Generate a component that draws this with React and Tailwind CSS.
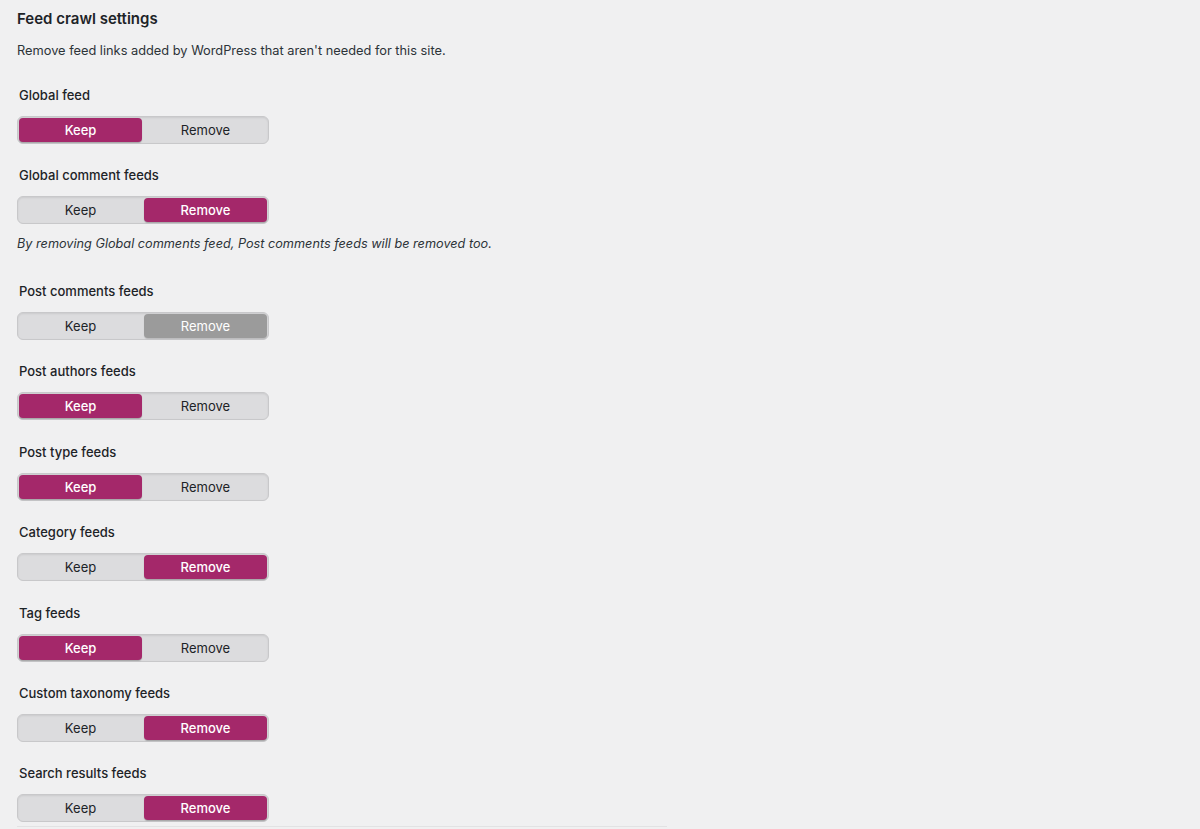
import { useState } from 'react';

const initial = [
  { id: 'global', label: 'Global feed', value: 'keep', gap: '' },
  {
    id: 'global_comments',
    label: 'Global comment feeds',
    value: 'remove',
    gap: 'mt-[21px]',
    note: 'By removing Global comments feed, Post comments feeds will be removed too.',
  },
  { id: 'post_comments', label: 'Post comments feeds', value: 'remove', disabled: true, gap: 'mt-[27px]' },
  { id: 'post_authors', label: 'Post authors feeds', value: 'keep', gap: 'mt-[21px]' },
  { id: 'post_type', label: 'Post type feeds', value: 'keep', gap: 'mt-[22px]' },
  { id: 'category', label: 'Category feeds', value: 'remove', gap: 'mt-[21px]' },
  { id: 'tag', label: 'Tag feeds', value: 'keep', gap: 'mt-[22px]' },
  { id: 'taxonomy', label: 'Custom taxonomy feeds', value: 'remove', gap: 'mt-[21px]' },
  { id: 'search', label: 'Search results feeds', value: 'remove', gap: 'mt-[21px]' },
];

function Toggle({ value, disabled, onChange }) {
  const seg = (key, text) => {
    const on = value === key;
    let cls = 'text-[#1d2327]';
    if (on) cls = disabled ? 'bg-[#9b9b9b] text-white shadow-[0_1px_1px_rgba(0,0,0,0.15)]' : 'bg-[#a4286a] text-white font-medium shadow-[0_1px_1px_rgba(0,0,0,0.25)]';
    return (
      <button
        type="button"
        onClick={() => !disabled && onChange(key)}
        className={`w-[123px] h-[24px] rounded-[4px] text-[13px] leading-[24px] ${cls}`}
      >
        {text}
      </button>
    );
  };
  return (
    <div className="flex w-[252px] h-[28px] p-[1px] rounded-[6px] border border-[#c8c8ca] bg-[#dcdcde] shadow-[inset_0_1px_2px_rgba(0,0,0,0.08)] gap-[2px]">
      {seg('keep', 'Keep')}
      {seg('remove', 'Remove')}
    </div>
  );
}

export default function App() {
  const [settings, setSettings] = useState(initial);

  const update = (id, value) =>
    setSettings(s => s.map(item => (item.id === id ? { ...item, value } : item)));

  return (
    <div
      className="min-h-[829px] bg-[#f0f0f1] text-[#1d2327] pl-[17px] pt-[9px]"
      style={{ fontFamily: 'Inter, "Noto Sans", sans-serif' }}
    >
      <h2 className="text-[15px] leading-[20px] font-semibold">Feed crawl settings</h2>
      <p className="mt-[12px] text-[12.8px] leading-[20px] text-[#2c3338]">
        Remove feed links added by WordPress that aren't needed for this site.
      </p>

      <div className="mt-[24px] flex flex-col">
        {settings.map(item => (
          <div key={item.id} className={item.gap}>
            <div className="pl-[2px] text-[13px] leading-[20px] font-medium">{item.label}</div>
            <div className="mt-[11px]">
              <Toggle value={item.value} disabled={item.disabled} onChange={v => update(item.id, v)} />
            </div>
            {item.note && (
              <p className="mt-[10px] text-[12.7px] leading-[20px] italic text-[#2c3338]">{item.note}</p>
            )}
          </div>
        ))}
      </div>
      <div className="mt-[4px] w-[650px] h-px bg-[#e2e2e3]" />
    </div>
  );
}
